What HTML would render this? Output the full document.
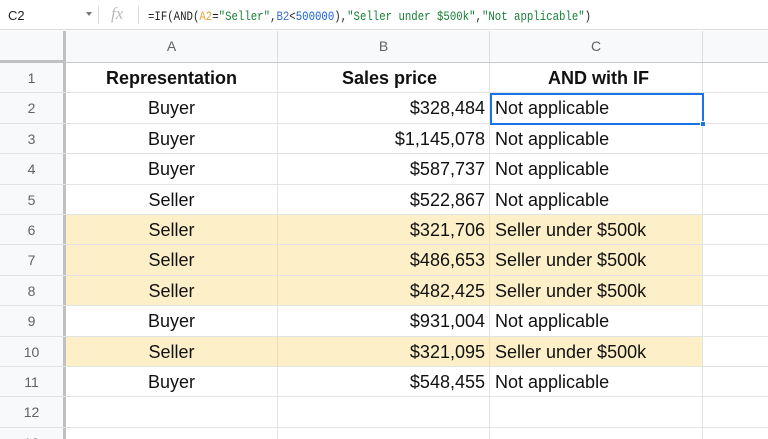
<!DOCTYPE html>
<html><head><meta charset="utf-8">
<style>
*{box-sizing:border-box;margin:0;padding:0}
html,body{width:768px;height:439px;overflow:hidden}
body{background:#fff;font-family:"Liberation Sans",Arial,sans-serif;position:relative;color:#000}
.abs{position:absolute}
#fbar{left:0;top:0;width:768px;height:30px;border-bottom:1px solid #dadce0;background:#fff}
.fm{font-family:"Liberation Mono",monospace;font-size:13px;transform:scaleX(0.823);transform-origin:0 0;white-space:nowrap}
.hdr{background:#f8f9fa;color:#5f6368;font-size:14px;text-align:center}
.row{position:absolute;left:0;width:768px;height:30.4px;border-bottom:1px solid #e2e3e3}
.c{position:absolute;top:0;height:100%;border-right:1px solid #e2e3e3;font-size:18px;line-height:30px;white-space:nowrap;overflow:hidden;color:#111}
.n{left:0;width:66px;background:#f8f9fa;color:#5f6368;font-size:14px;text-align:center;border-right:3px solid #c0c0c0;font-weight:normal!important}
.a{left:66px;width:212px;text-align:center}
.b{left:278px;width:212px;text-align:right;padding-right:4px}
.cc{left:490px;width:213px;padding-left:5px}
.d{left:703px;width:65px;border-right:none}
.y .a,.y .b,.y .cc{background:#fdf0c8}
.y .a,.y .b{border-right-color:#f0e0b0}
.h .c{font-weight:bold}
</style></head><body>
<div id="fbar" class="abs">
 <div class="abs" style="left:8px;top:8px;font-size:13px;color:#222">C2</div>
 <div class="abs" style="left:86px;top:12px;width:0;height:0;border-left:3px solid transparent;border-right:3px solid transparent;border-top:4px solid #777"></div>
 <div class="abs" style="left:98px;top:6px;width:1px;height:18px;background:#dadce0"></div>
 <div class="abs" style="left:111px;top:4px;font-family:'Liberation Serif',serif;font-style:italic;font-size:17px;color:#bbb">fx</div>
 <div class="abs" style="left:138px;top:6px;width:1px;height:18px;background:#dadce0"></div>
 <div class="abs fm" style="left:148px;top:9px;color:#222">=IF(AND(<span style="color:#e8a33d">A2</span>=<span style="color:#188038">"Seller"</span>,<span style="color:#3c6fd6">B2</span>&lt;<span style="color:#1a5fd0">500000</span>),<span style="color:#188038">"Seller under $500k"</span>,<span style="color:#188038">"Not applicable"</span>)</div>
</div>
<div class="abs hdr" style="left:0;top:31px;width:768px;height:32px;border-bottom:1px solid #c8c8c8"></div>
<div class="abs" style="left:0;top:31px;width:66px;height:32px;background:#f8f9fa;border-right:3px solid #c0c0c0;border-bottom:3px solid #c0c0c0"></div>
<div class="abs hdr" style="left:66px;top:31px;width:212px;height:31px;line-height:31px;border-right:1px solid #dadce0">A</div>
<div class="abs hdr" style="left:278px;top:31px;width:212px;height:31px;line-height:31px;border-right:1px solid #dadce0">B</div>
<div class="abs hdr" style="left:490px;top:31px;width:213px;height:31px;line-height:31px;border-right:1px solid #dadce0">C</div>

<div class="row h" style="top:63px"><div class="c n">1</div><div class="c a">Representation</div><div class="c b" style="text-align:center;padding-left:16px">Sales price</div><div class="c cc" style="text-align:center">AND with IF</div><div class="c d"></div></div>
<div class="row" style="top:93.4px"><div class="c n">2</div><div class="c a">Buyer</div><div class="c b">$328,484</div><div class="c cc">Not applicable</div><div class="c d"></div></div>
<div class="row" style="top:123.8px"><div class="c n">3</div><div class="c a">Buyer</div><div class="c b">$1,145,078</div><div class="c cc">Not applicable</div><div class="c d"></div></div>
<div class="row" style="top:154.2px"><div class="c n">4</div><div class="c a">Buyer</div><div class="c b">$587,737</div><div class="c cc">Not applicable</div><div class="c d"></div></div>
<div class="row" style="top:184.6px"><div class="c n">5</div><div class="c a">Seller</div><div class="c b">$522,867</div><div class="c cc">Not applicable</div><div class="c d"></div></div>
<div class="row y" style="top:215px"><div class="c n">6</div><div class="c a">Seller</div><div class="c b">$321,706</div><div class="c cc">Seller under $500k</div><div class="c d"></div></div>
<div class="row y" style="top:245.4px"><div class="c n">7</div><div class="c a">Seller</div><div class="c b">$486,653</div><div class="c cc">Seller under $500k</div><div class="c d"></div></div>
<div class="row y" style="top:275.8px"><div class="c n">8</div><div class="c a">Seller</div><div class="c b">$482,425</div><div class="c cc">Seller under $500k</div><div class="c d"></div></div>
<div class="row" style="top:306.2px"><div class="c n">9</div><div class="c a">Buyer</div><div class="c b">$931,004</div><div class="c cc">Not applicable</div><div class="c d"></div></div>
<div class="row y" style="top:336.6px"><div class="c n">10</div><div class="c a">Seller</div><div class="c b">$321,095</div><div class="c cc">Seller under $500k</div><div class="c d"></div></div>
<div class="row" style="top:367px"><div class="c n">11</div><div class="c a">Buyer</div><div class="c b">$548,455</div><div class="c cc">Not applicable</div><div class="c d"></div></div>
<div class="row" style="top:397.4px"><div class="c n">12</div><div class="c a"></div><div class="c b"></div><div class="c cc"></div><div class="c d"></div></div>
<div class="row" style="top:427.8px"><div class="c n">13</div><div class="c a"></div><div class="c b"></div><div class="c cc"></div><div class="c d"></div></div>

<div class="abs" style="left:490px;top:93px;width:214px;height:32px;border:2px solid #1a73e8"></div>
<div class="abs" style="left:700px;top:121px;width:6px;height:6px;background:#1a73e8;border:1px solid #fff"></div>
</body></html>
